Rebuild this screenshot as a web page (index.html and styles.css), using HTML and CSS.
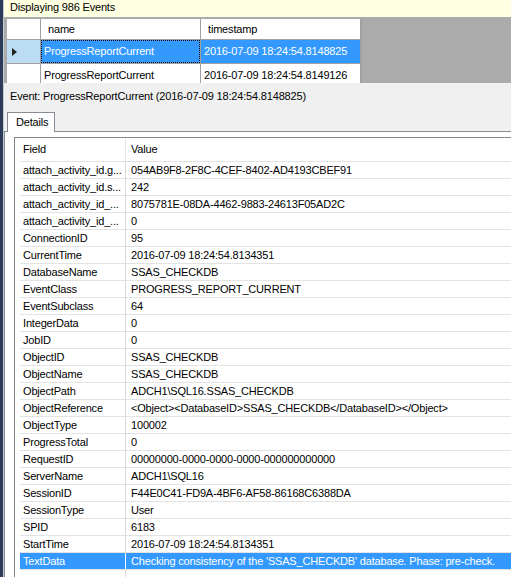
FILE: index.html
```html
<!DOCTYPE html>
<html lang="en">
<head>
  <meta charset="UTF-8" />
  <title>Events</title>
  <link rel="stylesheet" href="styles.css">
</head>
<body>
  <div class="window">
    <div class="dock-edge"></div>
    <div class="main">
      <div class="banner">Displaying 986 Events</div>

      <div class="events">
        <div class="grid">
          <div class="cell rowhead head"></div>
          <div class="cell head">name</div>
          <div class="cell head">timestamp</div>

          <div class="cell rowhead current"><span class="arrow"></span></div>
          <div class="cell selected focus">ProgressReportCurrent</div>
          <div class="cell selected">2016-07-09 18:24:54.8148825</div>

          <div class="cell rowhead"></div>
          <div class="cell">ProgressReportCurrent</div>
          <div class="cell">2016-07-09 18:24:54.8149126</div>
        </div>
      </div>

      <div class="event-title">Event: ProgressReportCurrent (2016-07-09 18:24:54.8148825)</div>

      <div class="tabs">
        <div class="tab">Details</div>
      </div>

      <div class="tab-page">
        <div class="props">
          <div class="prop props-head"><span class="field">Field</span><span class="value">Value</span></div>
          <div class="prop"><span class="field">attach_activity_id.g...</span><span class="value">054AB9F8-2F8C-4CEF-8402-AD4193CBEF91</span></div>
          <div class="prop"><span class="field">attach_activity_id.s...</span><span class="value">242</span></div>
          <div class="prop"><span class="field">attach_activity_id_...</span><span class="value">8075781E-08DA-4462-9883-24613F05AD2C</span></div>
          <div class="prop"><span class="field">attach_activity_id_...</span><span class="value">0</span></div>
          <div class="prop"><span class="field">ConnectionID</span><span class="value">95</span></div>
          <div class="prop"><span class="field">CurrentTime</span><span class="value">2016-07-09 18:24:54.8134351</span></div>
          <div class="prop"><span class="field">DatabaseName</span><span class="value">SSAS_CHECKDB</span></div>
          <div class="prop"><span class="field">EventClass</span><span class="value">PROGRESS_REPORT_CURRENT</span></div>
          <div class="prop"><span class="field">EventSubclass</span><span class="value">64</span></div>
          <div class="prop"><span class="field">IntegerData</span><span class="value">0</span></div>
          <div class="prop"><span class="field">JobID</span><span class="value">0</span></div>
          <div class="prop"><span class="field">ObjectID</span><span class="value">SSAS_CHECKDB</span></div>
          <div class="prop"><span class="field">ObjectName</span><span class="value">SSAS_CHECKDB</span></div>
          <div class="prop"><span class="field">ObjectPath</span><span class="value">ADCH1\SQL16.SSAS_CHECKDB</span></div>
          <div class="prop"><span class="field">ObjectReference</span><span class="value">&lt;Object&gt;&lt;DatabaseID&gt;SSAS_CHECKDB&lt;/DatabaseID&gt;&lt;/Object&gt;</span></div>
          <div class="prop"><span class="field">ObjectType</span><span class="value">100002</span></div>
          <div class="prop"><span class="field">ProgressTotal</span><span class="value">0</span></div>
          <div class="prop"><span class="field">RequestID</span><span class="value">00000000-0000-0000-0000-000000000000</span></div>
          <div class="prop"><span class="field">ServerName</span><span class="value">ADCH1\SQL16</span></div>
          <div class="prop"><span class="field">SessionID</span><span class="value">F44E0C41-FD9A-4BF6-AF58-86168C6388DA</span></div>
          <div class="prop"><span class="field">SessionType</span><span class="value">User</span></div>
          <div class="prop"><span class="field">SPID</span><span class="value">6183</span></div>
          <div class="prop"><span class="field">StartTime</span><span class="value">2016-07-09 18:24:54.8134351</span></div>
          <div class="prop active"><span class="field">TextData</span><span class="value">Checking consistency of the 'SSAS_CHECKDB' database. Phase: pre-check.</span></div>
          <div class="prop empty"><span class="field"></span><span class="value"></span></div>
        </div>
      </div>
    </div>
  </div>
</body>
</html>
```

FILE: styles.css
```css
html, body {
  margin: 0;
  padding: 0;
}

body {
  width: 511px;
  height: 577px;
  overflow: hidden;
  background: #f0f0f0;
  font-family: 'Liberation Sans', Arial, sans-serif;
  font-size: 11px;
  letter-spacing: -0.18px;
  color: #000;
}

.window {
  display: flex;
  height: 577px;
}

.dock-edge {
  width: 3px;
  background: #2c3b57;
  border-right: 1px solid #c4ccd8;
  flex-shrink: 0;
}

.main {
  flex: 1;
  display: flex;
  flex-direction: column;
  min-width: 0;
}

.banner {
  height: 17px;
  line-height: 14px;
  padding-left: 6px;
  background: #ffffe1;
  white-space: nowrap;
}

.events {
  height: 64px;
  padding: 2px 0 0 3px;
  background: #ababab;
  overflow: hidden;
}

.grid {
  display: grid;
  grid-template-columns: 33px 159px 159px;
  grid-template-rows: 20px 23px 23px;
  gap: 1px;
  width: 354px;
  background: #a0a0a0;
  border-right: 1px solid #a0a0a0;
}

.cell {
  background: #fff;
  line-height: 23px;
  padding-left: 3px;
  white-space: nowrap;
  overflow: hidden;
}

.cell.head {
  line-height: 20px;
  padding-left: 7px;
}

.cell.rowhead {
  padding-left: 0;
}

.rowhead.current {
  background: #bcdcf4;
  display: flex;
  align-items: center;
  padding-left: 5px;
}

.arrow {
  width: 0;
  height: 0;
  border-left: 5px solid #222;
  border-top: 4px solid transparent;
  border-bottom: 4px solid transparent;
}

.cell.selected {
  background: #3399ff;
  color: #fff;
}

.cell.focus {
  outline: 1px dotted #000;
  outline-offset: -1px;
}

.event-title {
  padding: 7px 0 9px 6px;
  line-height: 13px;
  white-space: nowrap;
}

.tabs {
  height: 19px;
  padding-left: 3px;
  display: flex;
}

.tab {
  position: relative;
  z-index: 1;
  height: 19px;
  line-height: 19px;
  padding: 0 6px 0 8px;
  margin-bottom: -1px;
  background: #fff;
  border: 1px solid #898c95;
  border-bottom: none;
}

.tab-page {
  flex: 1;
  background: #fff;
  border-top: 1px solid #898c95;
  border-left: 1px solid #898c95;
  padding: 5px 0 0 9px;
  overflow: hidden;
}

.props {
  border-top: 1px solid #828790;
  border-left: 1px solid #828790;
  background: #fff;
}

.prop {
  display: grid;
  grid-template-columns: 106px 1fr;
  margin-left: 5px;
  height: 16px;
  line-height: 16px;
  border-bottom: 1px solid #e3e3e3;
  white-space: nowrap;
}

.prop .field {
  padding-left: 3px;
  border-right: 1px solid #dadada;
  overflow: hidden;
}

.prop .value {
  padding-left: 5px;
  overflow: hidden;
}

.props-head {
  height: 23px;
  line-height: 23px;
}

.props-head .field {
  border-right-color: #e8e8e8;
}

.prop.active .field,
.prop.active .value {
  background: #3399ff;
  color: #fff;
}

.prop.active .field {
  border-right-color: #fff;
}

.prop.empty {
  border-bottom: none;
}
```
